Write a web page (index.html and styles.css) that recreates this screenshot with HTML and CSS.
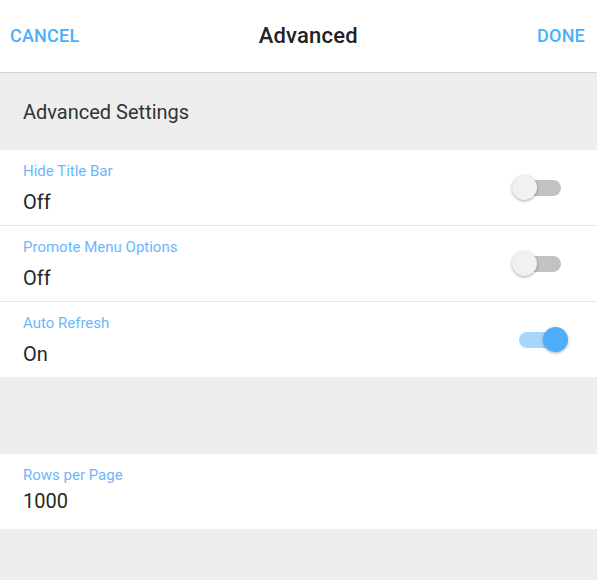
FILE: index.html
```html
<!DOCTYPE html>
<html>
<head>
<meta charset="utf-8">
<title>Advanced</title>
<link rel="stylesheet" href="styles.css">
</head>
<body>
<header class="topbar">
  <span class="action">CANCEL</span>
  <span class="title">Advanced</span>
  <span class="action">DONE</span>
</header>
<div class="section-head">Advanced Settings</div>
<div class="group">
  <div class="row">
    <div class="row-text">
      <div class="label">Hide Title Bar</div>
      <div class="value">Off</div>
    </div>
    <div class="switch"><div class="track"></div><div class="thumb"></div></div>
  </div>
  <div class="row">
    <div class="row-text">
      <div class="label">Promote Menu Options</div>
      <div class="value">Off</div>
    </div>
    <div class="switch"><div class="track"></div><div class="thumb"></div></div>
  </div>
  <div class="row">
    <div class="row-text">
      <div class="label">Auto Refresh</div>
      <div class="value">On</div>
    </div>
    <div class="switch on"><div class="track"></div><div class="thumb"></div></div>
  </div>
</div>
<div class="spacer"></div>
<div class="group">
  <div class="row plain">
    <div class="row-text">
      <div class="label">Rows per Page</div>
      <div class="value">1000</div>
    </div>
  </div>
</div>
</body>
</html>
```
FILE: styles.css
```css
html, body {
  margin: 0;
  padding: 0;
}
body {
  background: #eeeeee;
  font-family: Roboto, "Liberation Sans", sans-serif;
  color: #2a2a2a;
}
.topbar {
  height: 70px;
  background: #ffffff;
  border-bottom: 1px solid #d4d4d4;
  display: flex;
  align-items: center;
  justify-content: space-between;
  padding: 0 12px 2px 10px;
}
.action {
  font-size: 18px;
  font-weight: 500;
  letter-spacing: 0.2px;
  color: #48b0fd;
}
.title {
  font-size: 22px;
  font-weight: 500;
  letter-spacing: 0.2px;
  color: #222222;
}
.section-head {
  height: 77px;
  display: flex;
  align-items: center;
  padding: 1px 23px 0;
  box-sizing: border-box;
  font-size: 20px;
  color: #333333;
}
.group {
  background: #ffffff;
}
.row {
  display: flex;
  align-items: center;
  padding: 11px 22px 11px 23px;
  border-bottom: 1px solid #e6e6e6;
}
.row:last-child {
  border-bottom: none;
}
.row-text {
  flex: 1;
}
.label {
  font-size: 15px;
  line-height: 20px;
  color: #6cb7fc;
}
.value {
  font-size: 20px;
  line-height: 24px;
  margin-top: 9px;
  color: #262626;
}
.row.plain {
  padding-bottom: 16px;
}
.row.plain .value {
  margin-top: 4px;
}
.spacer {
  height: 77px;
}
.switch {
  position: relative;
  width: 56px;
  height: 25px;
  margin-right: 7px;
  display: flex;
  align-items: center;
}
.track {
  flex: 1;
  height: 16px;
  margin: 0 7px;
  border-radius: 8px;
  background: #c2c2c2;
}
.thumb {
  position: absolute;
  left: 0;
  top: 0;
  width: 25px;
  height: 25px;
  border-radius: 50%;
  background: #f1f1f1;
  box-shadow: 0 1px 3px rgba(0, 0, 0, 0.35);
}
.switch.on .track {
  background: #a7d6fd;
}
.switch.on .thumb {
  left: 31px;
  background: #4eaefc;
}
```
